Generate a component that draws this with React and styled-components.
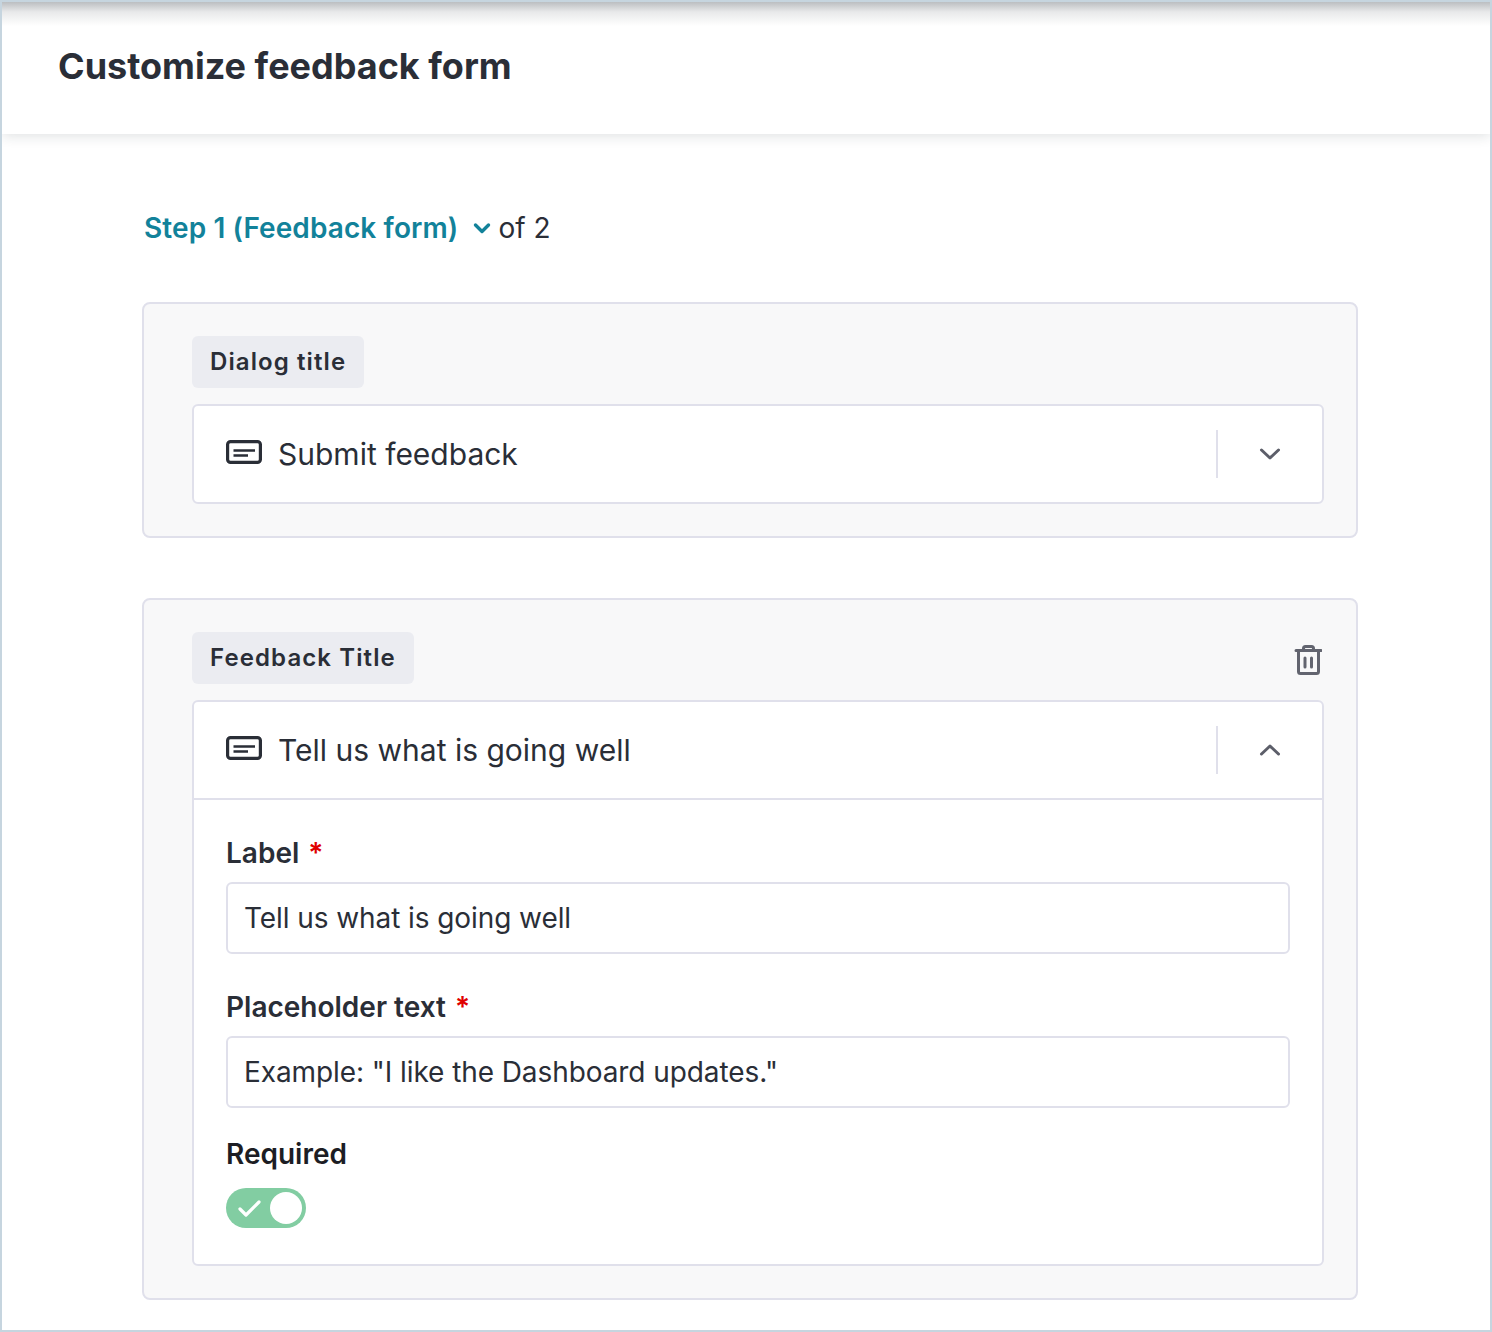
import React from 'react'
import styled, { createGlobalStyle } from 'styled-components'

const Global = createGlobalStyle`
  html, body { margin: 0; padding: 0; background: #fff; }
  body { font-family: Inter, "Liberation Sans", sans-serif; color: #2a2e37; }
  * { box-sizing: border-box; }
`

const Frame = styled.div`
  width: 1492px;
  height: 1332px;
  border: 2px solid #c6d5df;
  background: #fff;
  overflow: hidden;
`

const Header = styled.header`
  height: 132px;
  display: flex;
  align-items: center;
  padding: 0 0 4px 56px;
  background: linear-gradient(rgba(30, 40, 50, 0.3), rgba(30, 40, 50, 0.1) 10px, rgba(30, 40, 50, 0) 24px), #fff;
  box-shadow: 0 2px 12px rgba(30, 40, 50, 0.14);
`

const Title = styled.h1`
  margin: 0;
  font-size: 36px;
  line-height: 44px;
  font-weight: 700;
  color: #2a2e37;
`

const Main = styled.main`
  padding: 72px 132px 0 140px;
`

const Stepper = styled.div`
  display: flex;
  align-items: center;
  height: 44px;
  margin-bottom: 52px;
  padding-left: 2px;
  font-size: 28px;
  color: #2a2e37;
`

const StepName = styled.span`
  font-weight: 600;
  letter-spacing: 0.1px;
  color: #12829a;
`

const StepChevron = styled.svg`
  width: 20px;
  height: 20px;
  margin: 0 6px 0 14px;
  color: #12829a;
`

const Card = styled.section`
  position: relative;
  background: #f8f8f9;
  border: 2px solid #e0e0eb;
  border-radius: 8px;
  padding: 32px 32px 32px 48px;
  margin-bottom: 60px;
`

const Tag = styled.div`
  display: inline-flex;
  align-items: center;
  height: 52px;
  padding: 0 18px 2px;
  margin-bottom: 16px;
  vertical-align: top;
  background: #ebecf1;
  border-radius: 6px;
  font-size: 24px;
  font-weight: 600;
  letter-spacing: 1.1px;
  color: #2a2e37;
`

const Trash = styled.svg`
  position: absolute;
  top: 44px;
  right: 34px;
  width: 28px;
  height: 32px;
  color: #62646f;
`

const Accordion = styled.div`
  background: #fff;
  border: 2px solid #e0e0eb;
  border-radius: 6px;
`

const AccordionHead = styled.div`
  display: flex;
  align-items: center;
  height: ${p => (p.$open ? 98 : 96)}px;
  padding-left: 32px;
  border-bottom: ${p => (p.$open ? '2px solid #e0e0eb' : 'none')};
`

const MessageIcon = styled.svg`
  width: 36px;
  height: 24px;
  margin: 0 16px 4px 0;
  color: #2a2e37;
`

const HeadText = styled.span`
  flex: 1;
  font-size: 30px;
  color: #2a2e37;
`

const Toggle = styled.div`
  width: 106px;
  height: 48px;
  display: flex;
  align-items: center;
  justify-content: center;
  border-left: 2px solid #e0e0eb;
`

const Chevron = styled.svg`
  width: 24px;
  height: 24px;
  color: #5c5e69;
`

const Body = styled.div`
  padding: 36px 32px 36px 32px;
`

const Label = styled.label`
  display: block;
  height: 36px;
  line-height: ${p => (p.$dark ? 36 : 34)}px;
  margin-bottom: 10px;
  font-size: 28px;
  font-weight: 600;
  color: ${p => (p.$dark ? '#1c1d24' : '#2a2e37')};
`

const Star = styled.span`
  margin-left: 9px;
  color: #e00000;
`

const Input = styled.input`
  display: block;
  width: 100%;
  height: 72px;
  padding: 0 16px;
  margin-bottom: ${p => p.$gap}px;
  background: #fff;
  border: 2px solid #e0e0eb;
  border-radius: 6px;
  outline: none;
  font-family: inherit;
  font-size: 28px;
  letter-spacing: -0.08px;
  color: #2a2e37;
`

const Switch = styled.div`
  width: 80px;
  height: 40px;
  margin-top: 16px;
  padding: 4px;
  display: flex;
  align-items: center;
  justify-content: space-between;
  border-radius: 20px;
  background: #82cda2;
`

const SwitchCheck = styled.svg`
  width: 24px;
  height: 20px;
  margin-left: 8px;
  color: #fff;
`

const Knob = styled.span`
  width: 32px;
  height: 32px;
  border-radius: 50%;
  background: #fff;
`

function FieldIcon() {
  return (
    <MessageIcon viewBox="0 0 36 24" fill="none" stroke="currentColor" strokeWidth="3.2">
      <rect x="1.6" y="1.6" width="32.8" height="20.8" rx="3" />
      <path d="M7.5 10.5H29M7.5 15.5H22" strokeWidth="2.6" />
    </MessageIcon>
  )
}

function Arrow({ up }) {
  return (
    <Chevron viewBox="0 0 24 24" fill="none" stroke="currentColor" strokeWidth="3" strokeLinecap="round" strokeLinejoin="round">
      <path d={up ? 'M3.5 16L12 8l8.5 8' : 'M3.5 8L12 16l8.5-8'} />
    </Chevron>
  )
}

export default function App() {
  return (
    <>
      <Global />
      <Frame>
        <Header>
          <Title>Customize feedback form</Title>
        </Header>
        <Main>
          <Stepper>
            <StepName>Step 1 (Feedback form)</StepName>
            <StepChevron viewBox="0 0 20 20" fill="none" stroke="currentColor" strokeWidth="3.4" strokeLinecap="round" strokeLinejoin="round">
              <path d="M3.5 7l6.5 6.5L16.5 7" />
            </StepChevron>
            of 2
          </Stepper>

          <Card>
            <Tag>Dialog title</Tag>
            <Accordion>
              <AccordionHead>
                <FieldIcon />
                <HeadText>Submit feedback</HeadText>
                <Toggle><Arrow /></Toggle>
              </AccordionHead>
            </Accordion>
          </Card>

          <Card>
            <Tag>Feedback Title</Tag>
            <Trash viewBox="0 0 28 32" fill="none" stroke="currentColor" strokeWidth="3" strokeLinecap="round" strokeLinejoin="round">
              <path d="M2 6.5h25M9.5 6V4.5a2 2 0 0 1 2-2h6a2 2 0 0 1 2 2V6" />
              <path d="M4.5 7v20.5a2 2 0 0 0 2 2h16a2 2 0 0 0 2-2V7" />
              <path d="M11 14v9M17.5 14v9" />
            </Trash>
            <Accordion>
              <AccordionHead $open>
                <FieldIcon />
                <HeadText>Tell us what is going well</HeadText>
                <Toggle><Arrow up /></Toggle>
              </AccordionHead>
              <Body>
                <Label>Label<Star>*</Star></Label>
                <Input $gap={36} defaultValue="Tell us what is going well" />
                <Label>Placeholder text<Star>*</Star></Label>
                <Input $gap={28} defaultValue={'Example: "I like the Dashboard updates."'} />
                <Label $dark>Required</Label>
                <Switch>
                  <SwitchCheck viewBox="0 0 24 20" fill="none" stroke="currentColor" strokeWidth="3.2" strokeLinecap="round" strokeLinejoin="round">
                    <path d="M2 11l6 6L21 4" />
                  </SwitchCheck>
                  <Knob />
                </Switch>
              </Body>
            </Accordion>
          </Card>
        </Main>
      </Frame>
    </>
  )
}
